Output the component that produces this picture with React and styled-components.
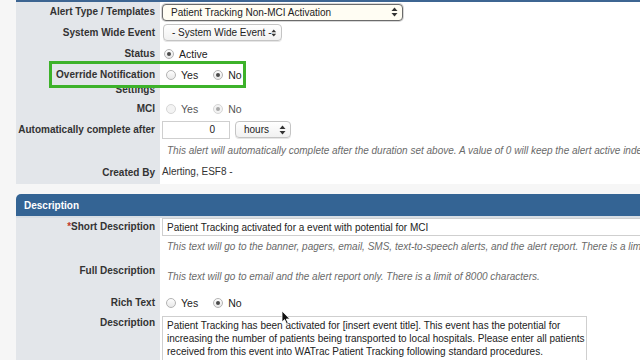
import React from "react";
import styled, { createGlobalStyle } from "styled-components";

const Global = createGlobalStyle`
  html, body { margin: 0; padding: 0; background: #f6f6f6; overflow: hidden; }
  body { font-family: "Liberation Sans", Arial, sans-serif; font-size: 10px; color: #333; }
  * { box-sizing: border-box; }
`;

const Page = styled.div`
  position: relative;
  width: 640px;
  height: 360px;
  padding-left: 16px;
  overflow: hidden;
`;

const TopPanel = styled.div`
  border-top: 2px solid #3d6592;
  background: #fff;
`;

const Grid = styled.div`
  display: grid;
  grid-template-columns: 144px 1fr;
`;

const Label = styled.div`
  background: #e3e6ea;
  font-weight: bold;
  font-size: 10px;
  text-align: right;
  padding: ${(p) => p.$pt || 0}px 5px 0 0;
  min-height: ${(p) => p.$h}px;
  line-height: ${(p) => p.$lh || p.$h}px;
  white-space: nowrap;
  color: #333;
`;

const Value = styled.div`
  display: flex;
  align-items: ${(p) => (p.$top ? "flex-start" : "center")};
  gap: ${(p) => p.$gap || 0}px;
  padding: ${(p) => p.$pt || 0}px 0 0 ${(p) => (p.$pl ?? 2)}px;
  min-height: ${(p) => p.$h}px;
  white-space: nowrap;
  overflow: hidden;
  background: #fff;
  font-size: 10px;
`;

const Help = styled.span`
  font-style: italic;
  color: #6a6a6a;
  font-size: 10px;
  padding-left: 5px;
`;

const SelectBox = styled.div`
  display: flex;
  align-items: center;
  justify-content: space-between;
  width: ${(p) => p.$w}px;
  height: 17px;
  padding: 0 4px 0 8px;
  border: 1px solid ${(p) => (p.$focus ? "#6b6b6b" : "#c4c4c4")};
  border-radius: 4px;
  background: ${(p) => (p.$focus ? "#fffdf3" : "linear-gradient(#ffffff, #f1f1f1)")};
  box-shadow: ${(p) => (p.$focus ? "0 0 0 1px #d8d8d8" : "0 1px 0 #e6e6e6")};
  font-size: 10px;
  color: #222;
  flex-shrink: 0;
`;

const TextInput = styled.div`
  width: ${(p) => p.$w}px;
  height: 18px;
  border: 1px solid #cfcfcf;
  background: #fff;
  display: flex;
  align-items: center;
  justify-content: ${(p) => (p.$right ? "flex-end" : "flex-start")};
  padding: ${(p) => (p.$right ? "0 14px 0 0" : "0 0 0 4px")};
  color: #222;
  font-size: 10px;
  flex-shrink: 0;
`;

const TextArea = styled.div`
  width: 425px;
  height: 60px;
  border: 1px solid #cfcfcf;
  background: #fff;
  padding: 2px 4px;
  line-height: 13px;
  font-size: 10px;
  color: #222;
  white-space: nowrap;
  flex-shrink: 0;
`;

const Line = styled.div``;

const RadioGroup = styled.div`
  display: flex;
  align-items: center;
  gap: 15px;
  padding-left: ${(p) => p.$pl || 0}px;
`;

const Option = styled.label`
  display: flex;
  align-items: center;
  gap: 5px;
  font-size: 10.5px;
  color: ${(p) => (p.$disabled ? "#555" : "#222")};
`;

const Circle = styled.span`
  width: 10px;
  height: 10px;
  border-radius: 50%;
  border: 1px solid ${(p) => (p.$disabled ? "#d6d6d6" : "#b3b3b3")};
  background: ${(p) => (p.$disabled ? "#f3f3f3" : "linear-gradient(#fdfdfd, #e8e8e8)")};
  display: flex;
  align-items: center;
  justify-content: center;
  &::after {
    content: "";
    width: 4px;
    height: 4px;
    border-radius: 50%;
    background: ${(p) => (p.$checked ? (p.$disabled ? "#a8a8a8" : "#4a4a4a") : "transparent")};
  }
`;

const Gap = styled.div`
  height: 10px;
`;

const SectionHeader = styled.div`
  height: 24px;
  background: #346494;
  border-top-left-radius: 5px;
  color: #fff;
  font-weight: bold;
  font-size: 10px;
  padding-left: 8px;
  display: flex;
  align-items: center;
  border-bottom: 2px solid #d8dee4;
`;

const Req = styled.span`
  color: #c0392b;
`;

const Highlight = styled.div`
  position: absolute;
  left: 49px;
  top: 61px;
  width: 197px;
  height: 27px;
  border: 3px solid #3db22a;
  pointer-events: none;
`;

const Cursor = styled.svg`
  position: absolute;
  left: 281px;
  top: 310px;
`;

const Arrows = () => (
  <svg width="7" height="10" viewBox="0 0 7 10">
    <path d="M3.5 0.5 L6.5 4 L0.5 4 Z" fill="#333" />
    <path d="M3.5 9.5 L6.5 6 L0.5 6 Z" fill="#333" />
  </svg>
);

const Radio = ({ label, checked, disabled }) => (
  <Option $disabled={disabled}>
    <Circle $checked={checked} $disabled={disabled} />
    {label}
  </Option>
);

export default function App() {
  return (
    <>
      <Global />
      <Page>
        <TopPanel>
          <Grid>
            <Label $h={20}>Alert Type / Templates</Label>
            <Value $h={20}>
              <SelectBox $w={241} $focus>
                <span>Patient Tracking Non-MCI Activation</span>
                <Arrows />
              </SelectBox>
            </Value>

            <Label $h={21}>System Wide Event</Label>
            <Value $h={21} $pl={3}>
              <SelectBox $w={119}>
                <span>- System Wide Event -</span>
                <Arrows />
              </SelectBox>
            </Value>

            <Label $h={21}>Status</Label>
            <Value $h={21}>
              <RadioGroup $pl={2}>
                <Radio label="Active" checked />
              </RadioGroup>
            </Value>

            <Label $h={35} $lh={15} $pt={3}>
              Override Notification
              <br />
              Settings
            </Label>
            <Value $h={35} $top $pt={5}>
              <RadioGroup $pl={4}>
                <Radio label="Yes" />
                <Radio label="No" checked />
              </RadioGroup>
            </Value>

            <Label $h={20}>MCI</Label>
            <Value $h={20}>
              <RadioGroup $pl={4}>
                <Radio label="Yes" disabled />
                <Radio label="No" checked disabled />
              </RadioGroup>
            </Value>

            <Label $h={21}>Automatically complete after</Label>
            <Value $h={21} $gap={5}>
              <TextInput $w={68} $right>0</TextInput>
              <SelectBox $w={56}>
                <span>hours</span>
                <Arrows />
              </SelectBox>
            </Value>

            <Label $h={21} />
            <Value $h={21}>
              <Help>
                This alert will automatically complete after the duration set above. A value of 0 will keep the alert active indefinitely.
              </Help>
            </Value>

            <Label $h={23} $lh={14} $pt={5}>Created By</Label>
            <Value $h={23} $top $pt={5}>
              Alerting, ESF8 -
            </Value>
          </Grid>
        </TopPanel>

        <Gap />

        <SectionHeader>Description</SectionHeader>
        <Grid>
          <Label $h={18}>
            <Req>*</Req>Short Description
          </Label>
          <Value $h={18} $pl={2}>
            <TextInput $w={500}>Patient Tracking activated for a event with potential for MCI</TextInput>
          </Value>

          <Label $h={20} />
          <Value $h={20}>
            <Help>
              This text will go to the banner, pagers, email, SMS, text-to-speech alerts, and the alert report. There is a limit of 250 characters.
            </Help>
          </Value>

          <Label $h={36} $lh={14} $pt={8}>Full Description</Label>
          <Value $h={36} $top $pt={15}>
            <Help>This text will go to email and the alert report only. There is a limit of 8000 characters.</Help>
          </Value>

          <Label $h={21}>Rich Text</Label>
          <Value $h={21}>
            <RadioGroup $pl={4}>
              <Radio label="Yes" />
              <Radio label="No" checked />
            </RadioGroup>
          </Value>

          <Label $h={70} $lh={14} $pt={3}>Description</Label>
          <Value $h={70} $top $pt={3}>
            <TextArea>
              <Line>Patient Tracking has been activated for [insert event title]. This event has the potential for</Line>
              <Line>increasing the number of patients being transported to local hospitals. Please enter all patients</Line>
              <Line>received from this event into WATrac Patient Tracking following standard procedures.</Line>
            </TextArea>
          </Value>
        </Grid>

        <Highlight />
        <Cursor width="10" height="15" viewBox="0 0 10 15">
          <path d="M1 1 L1 12 L3.6 9.6 L5.6 14 L7.2 13.3 L5.3 9 L8.8 9 Z" fill="#111" stroke="#fff" strokeWidth="0.8" />
        </Cursor>
      </Page>
    </>
  );
}
